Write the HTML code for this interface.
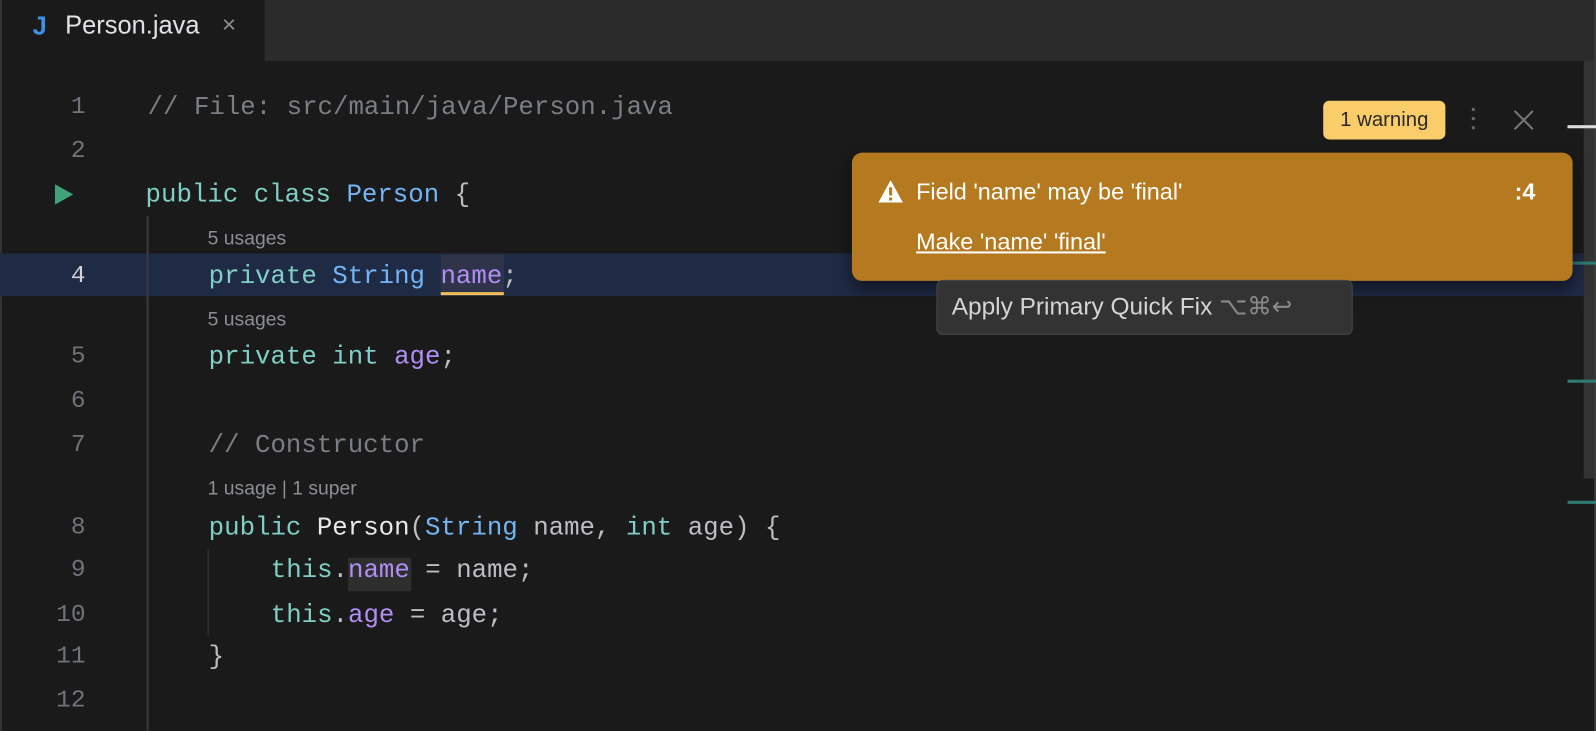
<!DOCTYPE html>
<html><head><style>
body{margin:0;width:1596px;height:718px;background:#1a1a1a;overflow:hidden;position:relative;font-family:"Liberation Sans",sans-serif}
#w{position:absolute;left:0;top:0;width:1568px;height:706px;transform:scale(1.01786);transform-origin:0 0}
.a{position:absolute;white-space:pre}
.m{font-family:"Liberation Mono",monospace;font-size:25.3px;line-height:30px;color:#bcbec4}
.ln{position:absolute;width:60px;left:24px;text-align:right;font-family:"Liberation Mono",monospace;font-size:24px;line-height:30px;color:#6f737a}
.k{color:#7fcfc6}.t{color:#73b4f5}.f{color:#b08ef5}.c{color:#7a7e85}
.h{font-size:19px;color:#8b8e94;line-height:24px}
</style></head><body><div id="w">
<div class="a" style="left:0;top:0;width:260px;height:60px;background:#1a1a1a"></div>
<div class="a" style="left:260px;top:0;width:1340px;height:60px;background:#2b2b2b"></div>
<div class="a" style="left:0;top:0;width:2px;height:718px;background:#333"></div>
<div class="a" style="left:32px;top:12px;font-size:25px;color:#3d8fe8;font-weight:bold">J</div>
<div class="a" style="left:64px;top:11px;font-size:25px;color:#dfe1e5">Person.java</div>
<div class="a" style="left:218px;top:11px;font-size:24px;color:#8b8e94">×</div>

<div class="a" style="left:0;top:249px;width:1556px;height:42px;background:#1f2a45"></div>
<div class="a" style="left:144px;top:212px;width:2px;height:506px;background:#3a3a3a"></div>
<div class="a" style="left:204px;top:540px;width:1px;height:84px;background:#3a3a3a"></div>

<div class="ln" style="top:91px">1</div>
<div class="ln" style="top:134px">2</div>
<svg class="a" style="left:52px;top:180px" width="22" height="22"><path d="M2 1 L20 11 L2 21 Z" fill="#3fa279"/></svg>
<div class="ln" style="top:257px;color:#d0d2d6">4</div>
<div class="ln" style="top:336px">5</div>
<div class="ln" style="top:380px">6</div>
<div class="ln" style="top:423px">7</div>
<div class="ln" style="top:504px">8</div>
<div class="ln" style="top:546px">9</div>
<div class="ln" style="top:590px">10</div>
<div class="ln" style="top:631px">11</div>
<div class="ln" style="top:674px">12</div>

<div class="a m c" style="left:145px;top:91px">// File: src/main/java/Person.java</div>
<div class="a m" style="left:143px;top:177px"><span class="k">public class</span> <span class="t">Person</span> {</div>
<div class="a h" style="left:204px;top:223px">5 usages</div>
<div class="a" style="left:433px;top:250px;width:62px;height:40px;background:#30344a"></div>
<div class="a" style="left:433px;top:287px;width:62px;height:3px;background:#f2bd55"></div>
<div class="a m" style="left:205px;top:257px"><span class="k">private</span> <span class="t">String</span> <span class="f">name</span>;</div>
<div class="a h" style="left:204px;top:303px">5 usages</div>
<div class="a m" style="left:205px;top:336px"><span class="k">private int</span> <span class="f">age</span>;</div>
<div class="a m c" style="left:205px;top:423px">// Constructor</div>
<div class="a h" style="left:204px;top:469px">1 usage | 1 super</div>
<div class="a m" style="left:205px;top:504px"><span class="k">public</span> <b style="color:#e8e8e8;font-weight:normal">Person</b>(<span class="t">String</span> name, <span class="k">int</span> age) {</div>
<div class="a" style="left:342px;top:548px;width:62px;height:33px;background:#2e2e2e"></div>
<div class="a m" style="left:266px;top:546px"><span class="k">this</span>.<span class="f">name</span> = name;</div>
<div class="a m" style="left:266px;top:590px"><span class="k">this</span>.<span class="f">age</span> = age;</div>
<div class="a m" style="left:205px;top:631px">}</div>

<div class="a" style="left:1300px;top:99px;width:120px;height:38px;background:#fbcd6a;border-radius:6px;font-size:20px;color:#2a2a2a;line-height:38px;text-align:center">1 warning</div>
<div class="a" style="left:1446px;top:106px;width:3px;height:3px;background:#666;box-shadow:0 9px #666,0 18px #666"></div>
<svg class="a" style="left:1486px;top:107px" width="22" height="22"><path d="M2 2L20 20M20 2L2 20" stroke="#777" stroke-width="2"/></svg>

<div class="a" style="left:1556px;top:60px;width:10px;height:410px;background:#333"></div>
<div class="a" style="left:1566px;top:0;width:4px;height:718px;background:#3a3a3a"></div>
<div class="a" style="left:1540px;top:123px;width:28px;height:3px;background:#ddd"></div>
<div class="a" style="left:1540px;top:257px;width:28px;height:3px;background:#2e7c74"></div>
<div class="a" style="left:1540px;top:373px;width:28px;height:3px;background:#2e7c74"></div>
<div class="a" style="left:1540px;top:492px;width:28px;height:3px;background:#2e7c74"></div>

<div class="a" style="left:837px;top:150px;width:708px;height:126px;background:#b57a20;border-radius:10px;box-shadow:0 8px 16px rgba(0,0,0,.5)"></div>
<svg class="a" style="left:862px;top:176px" width="26" height="24"><path d="M13 1 L25 23 L1 23 Z" fill="#fff"/><rect x="11.5" y="8" width="3" height="8" fill="#b57a20"/><rect x="11.5" y="18" width="3" height="3" fill="#b57a20"/></svg>
<div class="a" style="left:900px;top:175px;font-size:23px;color:#fff">Field 'name' may be 'final'</div>
<div class="a" style="left:1488px;top:175px;font-size:23px;color:#fff;font-weight:bold">:4</div>
<div class="a" style="left:900px;top:224px;font-size:23px;color:#fff;text-decoration:underline">Make 'name' 'final'</div>

<div class="a" style="left:920px;top:275px;width:407px;height:52px;background:#333;border:1px solid #474747;border-radius:6px"></div>
<div class="a" style="left:935px;top:287px;font-size:24px;color:#d5d5d5">Apply Primary Quick Fix <span style="color:#8a8a8a">⌥⌘↩</span></div>
</div></body></html>
